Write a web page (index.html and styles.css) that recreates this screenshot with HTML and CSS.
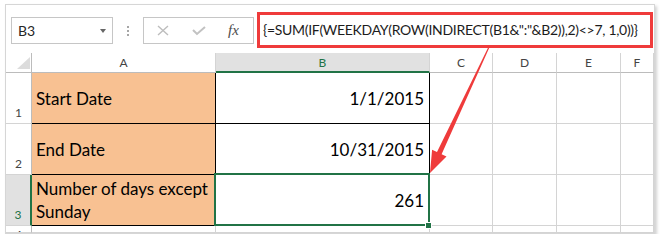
FILE: index.html
```html
<!DOCTYPE html>
<html lang="en">
<head>
    <meta charset="UTF-8">
    <title>Weekdays except Sunday</title>
    <link rel="stylesheet" href="styles.css">
</head>
<body>
    <div class="window">
        <div class="formula-bar">
            <div class="name-box">
                <span>B3</span>
                <span class="caret"></span>
            </div>
            <div class="grip"><i></i><i></i><i></i></div>
            <div class="tools">
                <svg width="12" height="12" viewBox="0 0 12 12">
                    <path d="M1 1 L11 10 M11 1 L1 10" stroke="#bdbdbd" stroke-width="1.4" fill="none"/>
                </svg>
                <svg width="14" height="10" viewBox="0 0 14 10">
                    <path d="M1 4 L5 8 L13 1" stroke="#c2c2c2" stroke-width="2" fill="none"/>
                </svg>
                <span class="fx">fx</span>
            </div>
            <div class="formula">{=SUM(IF(WEEKDAY(ROW(INDIRECT(B1&amp;":"&amp;B2)),2)&lt;&gt;7, 1,0))}</div>
        </div>

        <div class="sheet">
            <div class="hd corner"></div>
            <div class="hd col">A</div>
            <div class="hd col active">B</div>
            <div class="hd col">C</div>
            <div class="hd col">D</div>
            <div class="hd col">E</div>
            <div class="hd col">F</div>

            <div class="hd row">1</div>
            <div class="cell label">Start Date</div>
            <div class="cell value">1/1/2015</div>
            <div class="cell"></div>
            <div class="cell"></div>
            <div class="cell"></div>
            <div class="cell"></div>

            <div class="hd row">2</div>
            <div class="cell label">End Date</div>
            <div class="cell value">10/31/2015</div>
            <div class="cell"></div>
            <div class="cell"></div>
            <div class="cell"></div>
            <div class="cell"></div>

            <div class="hd row active">3</div>
            <div class="cell label">Number of days except<br>Sunday</div>
            <div class="cell value selected">261</div>
            <div class="cell"></div>
            <div class="cell"></div>
            <div class="cell"></div>
            <div class="cell"></div>

            <div class="hd row last">4</div>
            <div class="cell"></div>
            <div class="cell"></div>
            <div class="cell"></div>
            <div class="cell"></div>
            <div class="cell"></div>
            <div class="cell"></div>
        </div>
    </div>

    <!-- callout arrow from the formula to the result cell -->
    <svg class="arrow" width="660" height="240" viewBox="0 0 660 240">
        <polygon points="489.5,47.2 488.5,46.8 437.0,152.0 432.1,149.7 430,173 446.5,156.5 441.6,154.2" fill="#ef3b3b"/>
    </svg>
</body>
</html>
```

FILE: styles.css
```css
body {
    margin: 0;
    background: #fff;
    font-family: 'Lato', 'Open Sans', sans-serif;
    color: #000;
}
.window {
    position: relative;
    margin: 4px 0 0 5px;
    width: 650px;
    height: 230px;
    box-sizing: border-box;
    border: 1px solid #d6d6d6;
    box-shadow: 2px 2px 3px rgba(0, 0, 0, 0.18);
    overflow: hidden;
    background: #fff;
}

/* formula bar */
.formula-bar {
    display: flex;
    align-items: flex-start;
    height: 48px;
    box-sizing: border-box;
    padding: 12px 0 0 5px;
}
.name-box {
    display: flex;
    align-items: center;
    justify-content: space-between;
    width: 102px;
    height: 27px;
    box-sizing: border-box;
    border: 1px solid #c6c6c6;
    padding: 0 6px 0 6px;
    font-size: 14px;
    color: #262626;
}
.caret {
    width: 0;
    height: 0;
    border-left: 3.5px solid transparent;
    border-right: 3.5px solid transparent;
    border-top: 4px solid #666;
}
.grip {
    width: 30px;
    height: 27px;
    display: flex;
    flex-direction: column;
    align-items: center;
    justify-content: center;
    gap: 2px;
}
.grip i {
    width: 2px;
    height: 2px;
    background: #a6a6a6;
}
.tools {
    display: flex;
    align-items: center;
    width: 111px;
    height: 27px;
    box-sizing: border-box;
    border: 1px solid #c6c6c6;
    padding-left: 13px;
    gap: 23px;
}
.fx {
    font-family: 'Liberation Serif', serif;
    font-style: italic;
    font-size: 15px;
    color: #4d4d4d;
    margin-left: -1px;
}
.formula {
    display: flex;
    align-items: center;
    margin: -5px 0 0 3px;
    width: 396px;
    height: 36px;
    box-sizing: border-box;
    border: 3px solid #ef3b3b;
    padding: 0 0 1px 3px;
    font-size: 14px;
    letter-spacing: -0.3px;
    color: #1c1c1c;
    white-space: nowrap;
}

/* sheet grid */
.sheet {
    display: grid;
    grid-template-columns: 26px 184px 214px 63px 64px 64px 1fr;
    grid-template-rows: 20px 51px 51px 51px 1fr;
    height: 180px;
}
.sheet > div {
    box-sizing: border-box;
    border-right: 1px solid #d4d4d4;
    border-bottom: 1px solid #d4d4d4;
    overflow: hidden;
}
.hd {
    font-size: 12px;
    color: #444;
    display: flex;
    justify-content: center;
}
.hd.col {
    align-items: center;
    border-bottom-color: #bcbcbc !important;
}
.hd.row {
    align-items: flex-end;
    padding-bottom: 3px;
    border-right-color: #bcbcbc !important;
}
.hd.row.last {
    align-items: flex-start;
    padding: 3px 0 0;
    line-height: 12px;
}
.hd.active {
    background: #e1e1e1;
    color: #217346;
}
.hd.col.active {
    border-bottom: 2px solid #217346 !important;
}
.hd.row.active {
    border-right: 2px solid #217346 !important;
}
.corner {
    position: relative;
    border-bottom-color: #bcbcbc !important;
    border-right-color: #bcbcbc !important;
}
.corner::after {
    content: "";
    position: absolute;
    right: 1px;
    bottom: 3px;
    width: 13px;
    height: 12px;
    background: #dcdcdc;
    clip-path: polygon(100% 0, 100% 100%, 0 100%);
}
.cell {
    display: flex;
    align-items: center;
    font-size: 17px;
    line-height: 23px;
    white-space: nowrap;
}
.label {
    background: #f8c192;
    padding-left: 4px;
    border-right-color: #000 !important;
    border-bottom-color: #000 !important;
}
.value {
    justify-content: flex-end;
    padding-right: 5px;
    border-right-color: #000 !important;
    border-bottom-color: #000 !important;
}
.selected {
    position: relative;
    overflow: visible !important;
}
.selected::after {
    content: "";
    position: absolute;
    top: -2px;
    left: -2px;
    right: -1px;
    bottom: -1px;
    border: 2px solid #217346;
    z-index: 1;
}
.selected::before {
    content: "";
    position: absolute;
    right: -2px;
    bottom: -3px;
    width: 5px;
    height: 5px;
    background: #217346;
    box-shadow: 0 0 0 1px #fff;
    z-index: 2;
}

.arrow {
    position: absolute;
    left: 0;
    top: 0;
    pointer-events: none;
}
```
